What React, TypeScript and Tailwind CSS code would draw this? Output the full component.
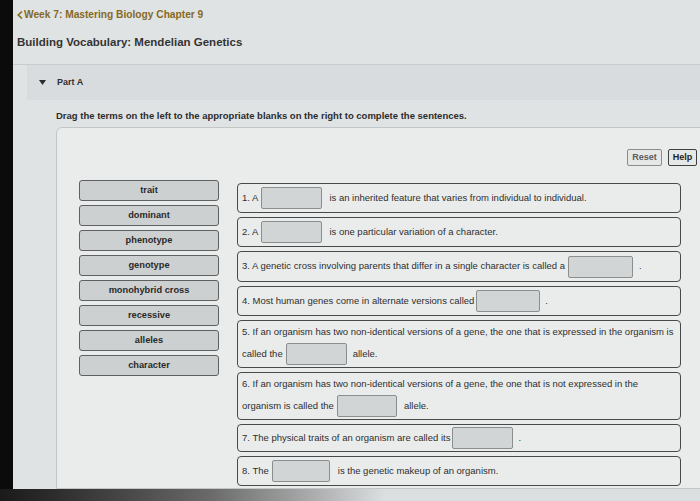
import React from 'react';

// term chips shown on the left
const terms = ['trait', 'dominant', 'phenotype', 'genotype', 'monohybrid cross', 'recessive', 'alleles', 'character'];

const Blank: React.FC<{ className?: string }> = ({ className }) => (
  <span className={`inline-block h-[22px] shrink-0 rounded-[2px] border border-[#8b8e8f] bg-[#d2d5d6] ${className ?? ''}`} />
);

const Row: React.FC<{ children: React.ReactNode; className?: string }> = ({ children, className }) => (
  <div className={`w-[444px] rounded-[4px] border-[1.5px] border-[#474a4b] bg-[#eaecec] pl-[4px] text-[9.5px] text-[#2e2e2e] ${className ?? ''}`}>
    {children}
  </div>
);

const App: React.FC = () => {
  return (
    <div className="flex h-[501px] w-[700px] flex-col overflow-hidden bg-black font-['Liberation_Sans',Arial,sans-serif]">
      <div className="flex h-[489px]">
        {/* screen bezel */}
        <div className="w-[13px] bg-[#0b0b0b]" />

        <div className="flex flex-1 flex-col overflow-hidden bg-[#e0e3e4]">
          {/* breadcrumb + title */}
          <div className="flex items-center pl-[4px] pt-[9px] text-[10.2px] leading-[12px] font-bold text-[#86691f]">
            <svg width="6" height="8" viewBox="0 0 6 8" className="mr-[1px]">
              <path d="M5 0.5 L1.2 4 L5 7.5" fill="none" stroke="#86691f" strokeWidth="1.6" />
            </svg>
            <span>Week 7: Mastering Biology Chapter 9</span>
          </div>
          <div className="mt-[14px] pl-[4px] text-[11.5px] leading-[14px] font-bold text-[#343434]">Building Vocabulary: Mendelian Genetics</div>
          <div className="mt-[15px] border-t border-[#c8cccd]" />

          {/* Part A header */}
          <div className="ml-[14px] flex h-[35px] items-center bg-[#d9dcde] pl-[12px]">
            <svg width="7" height="5" viewBox="0 0 7 5" className="mr-[11px]">
              <path d="M0 0 L7 0 L3.5 5 Z" fill="#2b2b2b" />
            </svg>
            <span className="text-[9px] font-bold text-[#2f2f2f]">Part A</span>
          </div>

          <div className="mt-[10px] pl-[43px] text-[9.5px] leading-[11px] font-bold text-[#2c2c2c]">
            Drag the terms on the left to the appropriate blanks on the right to complete the sentences.
          </div>

          {/* work panel */}
          <div className="ml-[43px] mt-[6px] w-[660px] flex-1 rounded-tl-[6px] border border-[#c3c6c7] bg-[#eaecec]">
            <div className="flex justify-end gap-[6px] pr-[18px] pt-[21px]">
              <button className="h-[17px] w-[35px] rounded-[2px] border border-[#8a8d8e] bg-[#e6e8e8] text-[9px] font-bold text-[#5a5c5d]">Reset</button>
              <button className="h-[17px] w-[29px] rounded-[2px] border border-[#3e4142] bg-[#e6e8e8] text-[9px] font-bold text-[#222]">Help</button>
            </div>

            <div className="mt-[14px] flex gap-[18px] pl-[22px]">
              {/* terms */}
              <div className="flex w-[140px] flex-col gap-[4px]">
                {terms.map(t => (
                  <div
                    key={t}
                    className="flex h-[21px] items-center justify-center rounded-[3px] border border-[#5e6162] bg-[#ccd0d1] text-[9.25px] font-bold text-[#2a2a2a]"
                  >
                    {t}
                  </div>
                ))}
              </div>

              {/* sentences */}
              <div className="mt-[3px] flex flex-col gap-[4px]">
                <Row className="flex h-[30px] items-center">
                  <span>1. A</span>
                  <Blank className="ml-[3px] w-[61px]" />
                  <span className="ml-[7px]">is an inherited feature that varies from individual to individual.</span>
                </Row>
                <Row className="flex h-[30px] items-center">
                  <span>2. A</span>
                  <Blank className="ml-[3px] w-[61px]" />
                  <span className="ml-[7px]">is one particular variation of a character.</span>
                </Row>
                <Row className="flex h-[31px] items-center">
                  <span>3. A genetic cross involving parents that differ in a single character is called a</span>
                  <Blank className="ml-[3px] w-[65px]" />
                  <span className="ml-[6px]">.</span>
                </Row>
                <Row className="flex h-[30px] items-center">
                  <span>4. Most human genes come in alternate versions called</span>
                  <Blank className="ml-[2px] w-[64px]" />
                  <span className="ml-[5px]">.</span>
                </Row>
                <Row className="flex h-[48px] flex-col justify-start pt-[5px]">
                  <div className="h-[12px] leading-[12px]">5. If an organism has two non-identical versions of a gene, the one that is expressed in the organism is</div>
                  <div className="mt-[5px] flex items-center">
                    <span>called the</span>
                    <Blank className="ml-[3px] w-[61px]" />
                    <span className="ml-[6px]">allele.</span>
                  </div>
                </Row>
                <Row className="flex h-[48px] flex-col justify-start pt-[5px]">
                  <div className="h-[12px] leading-[12px]">6. If an organism has two non-identical versions of a gene, the one that is not expressed in the</div>
                  <div className="mt-[5px] flex items-center">
                    <span>organism is called the</span>
                    <Blank className="ml-[3px] w-[60px]" />
                    <span className="ml-[7px]">allele.</span>
                  </div>
                </Row>
                <Row className="flex h-[28px] items-center">
                  <span>7. The physical traits of an organism are called its</span>
                  <Blank className="ml-[2px] w-[61px]" />
                  <span className="ml-[5px]">.</span>
                </Row>
                <Row className="flex h-[30px] items-center">
                  <span>8. The</span>
                  <Blank className="ml-[3px] w-[58px]" />
                  <span className="ml-[8px]">is the genetic makeup of an organism.</span>
                </Row>
              </div>
            </div>
          </div>
        </div>
      </div>

      {/* desk edge under the screen */}
      <div className="h-[12px] bg-gradient-to-r from-[#1a1a1a] via-[#6a6a6a] via-30% to-[#dcdfe0] to-55%" />
    </div>
  );
};

export default App;
